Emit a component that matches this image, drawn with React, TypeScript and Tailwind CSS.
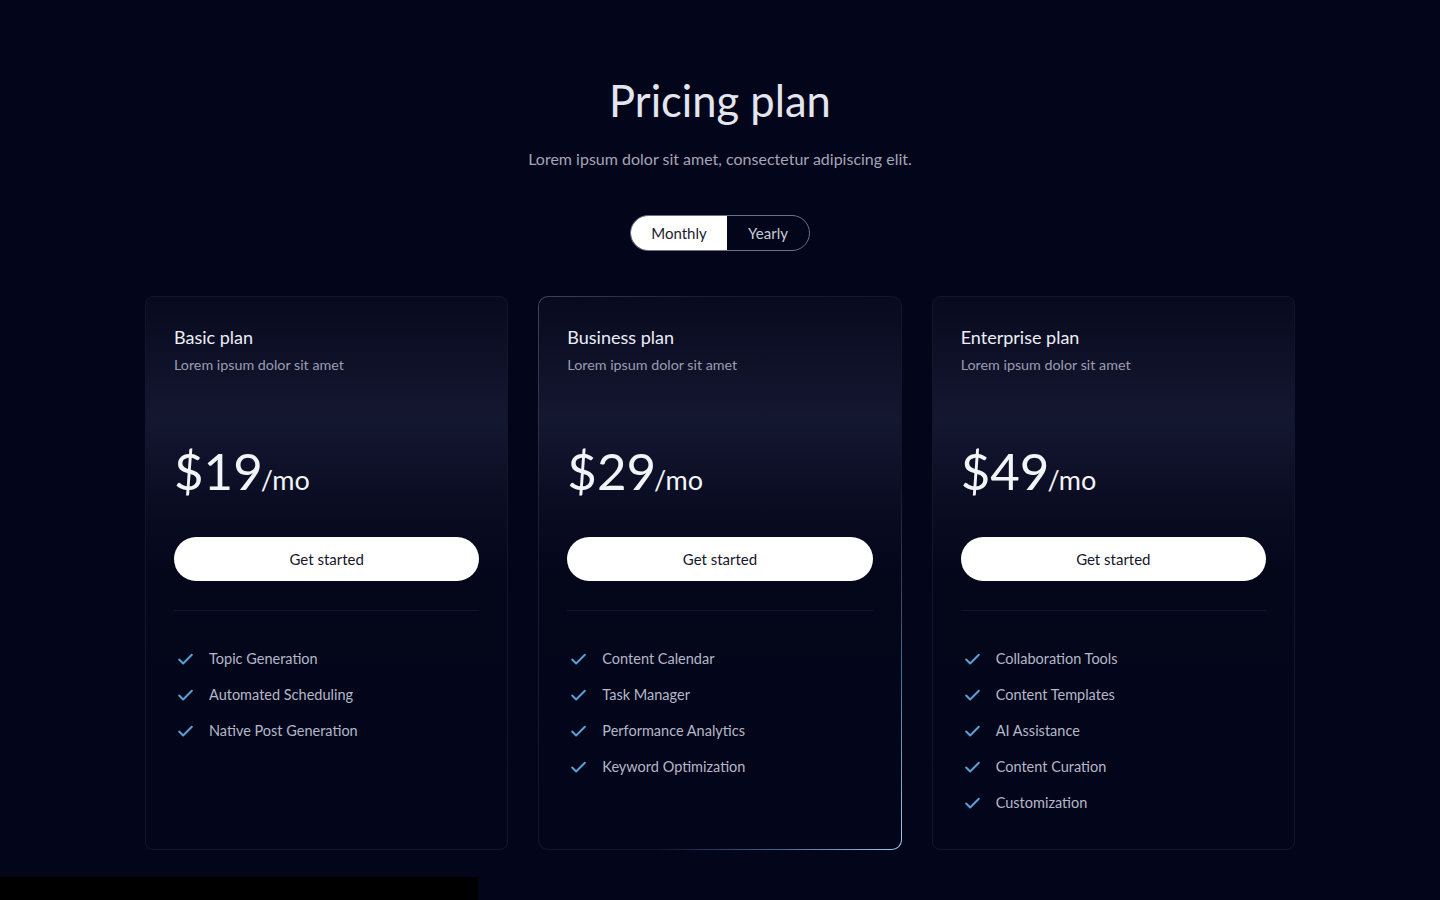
import React, { useState } from 'react';
import { Check } from 'lucide-react';

interface Plan {
    name: string;
    price: number;
    features: string[];
    featured?: boolean;
}

const PLANS: Plan[] = [
    { name: 'Basic plan', price: 19, features: ['Topic Generation', 'Automated Scheduling', 'Native Post Generation'] },
    { name: 'Business plan', price: 29, featured: true, features: ['Content Calendar', 'Task Manager', 'Performance Analytics', 'Keyword Optimization'] },
    { name: 'Enterprise plan', price: 49, features: ['Collaboration Tools', 'Content Templates', 'AI Assistance', 'Content Curation', 'Customization'] },
];

const CardBody: React.FC<{ plan: Plan }> = ({ plan }) => (
    <div className="flex flex-col px-[28px] pt-[27px]">
        <h3 className="text-[18px] leading-[26px] text-[#eceef6]">{plan.name}</h3>
        <p className="mt-[4px] text-[14.3px] leading-[22px] text-[#9a9db1]">Lorem ipsum dolor sit amet</p>

        <div className="mt-[66px] flex items-baseline leading-[58px] text-[#f3f4f8]">
            <span className="text-[51px]">${plan.price}</span>
            <span className="-ml-[2px] text-[27px]">/mo</span>
        </div>

        <button className="mt-[28px] h-[44px] w-full rounded-full bg-white text-[15px] text-[#15172a]">
            Get started
        </button>

        <div className="mt-[29px] h-px w-full bg-[#12152b]" />

        {/* Features */}
        <ul className="mt-[36px] flex flex-col gap-3">
            {plan.features.map(f => (
                <li key={f} className="flex items-center gap-[14px] text-[14.5px] leading-[24px] text-[#b4b8c9]">
                    <Check className="ml-[2px] h-[19px] w-[19px] text-[#5b9fd4]" strokeWidth={2.5} />
                    <span>{f}</span>
                </li>
            ))}
        </ul>
    </div>
);

const App: React.FC = () => {
    const [billing, setBilling] = useState<'monthly' | 'yearly'>('monthly');

    return (
        <div className="min-h-[900px] w-full bg-[#03051a] font-['Lato',sans-serif]">
            <div className="flex flex-col items-center pt-[73px]">
                <h1 className="text-[43.5px] leading-[55px] text-[#e3e5ef]">Pricing plan</h1>
                <p className="mt-[19px] text-[16px] leading-[24px] text-[#a3a6b8]">
                    Lorem ipsum dolor sit amet, consectetur adipiscing elit.
                </p>

                {/* Billing toggle */}
                <div className="mt-[44px] flex h-[36px] w-[180px] overflow-hidden rounded-full border border-[#6c7086]">
                    <button
                        onClick={() => setBilling('monthly')}
                        className={billing === 'monthly'
                            ? 'w-[96px] bg-white text-[15px] text-[#1a1c2c]'
                            : 'w-[96px] text-[15px] text-[#c9cbd7]'}
                    >
                        Monthly
                    </button>
                    <button
                        onClick={() => setBilling('yearly')}
                        className={billing === 'yearly'
                            ? 'flex-1 bg-white text-[15px] text-[#1a1c2c]'
                            : 'flex-1 text-[15px] text-[#c9cbd7]'}
                    >
                        Yearly
                    </button>
                </div>

                {/* Cards */}
                <div className="mt-[45px] grid w-[1150px] grid-cols-3 gap-[30px]">
                    {PLANS.map(plan => plan.featured ? (
                        <div
                            key={plan.name}
                            className="h-[554px] rounded-[10px] bg-[linear-gradient(to_bottom_right,#3d465c_0%,#181c34_22%,#10132a_66%,#4a6d94_84%,#a4cbee_100%)] p-px"
                        >
                            <div className="h-full rounded-[9px] bg-[linear-gradient(180deg,#080a1f_0%,#141730_22%,#0b0d24_36%,#04061a_50%,#03051a_100%)]">
                                <CardBody plan={plan} />
                            </div>
                        </div>
                    ) : (
                        <div
                            key={plan.name}
                            className="h-[554px] rounded-lg border border-[#12152b] bg-[linear-gradient(180deg,#080a1f_0%,#141730_22%,#0b0d24_36%,#04061a_50%,#03051a_100%)]"
                        >
                            <CardBody plan={plan} />
                        </div>
                    ))}
                </div>
            </div>

            <div className="mt-[27px] h-[23px] w-[478px] bg-black" />
        </div>
    );
};

export default App;
